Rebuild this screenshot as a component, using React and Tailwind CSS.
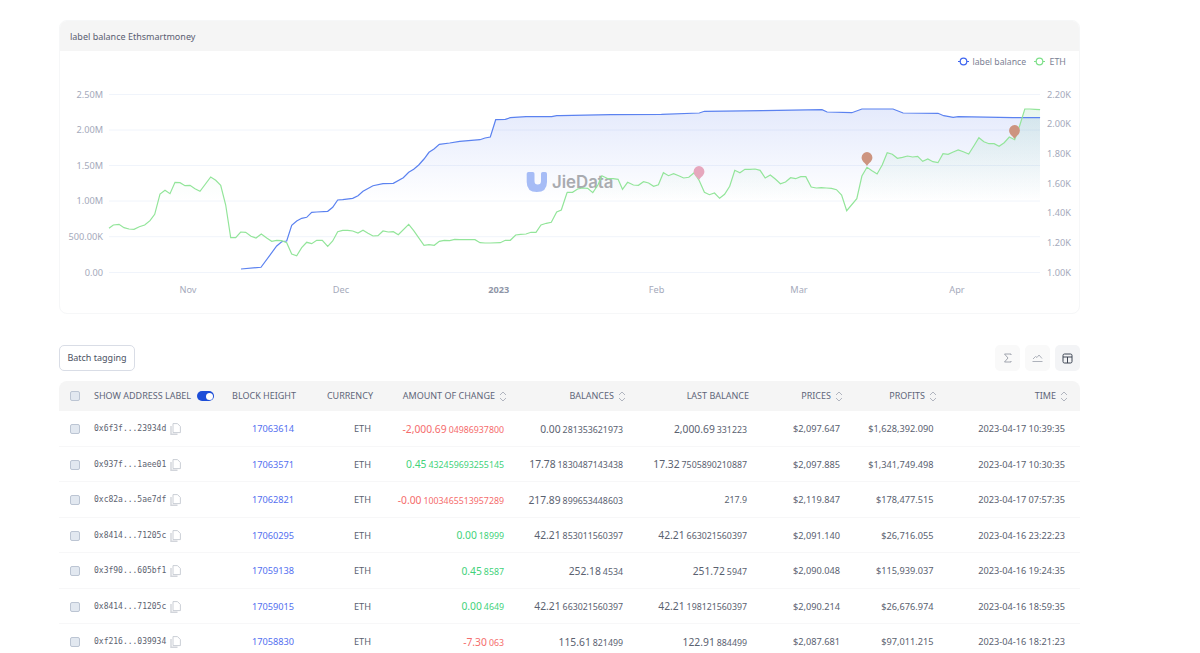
import React from 'react';

const FONT = { fontFamily: '"Noto Sans", "Open Sans", sans-serif' };

// traced from the reference, in crop coordinates
const left = (pts) => pts.map(([x, y]) => [50 + x / 3, 10 + y / 3]);
const right = (pts) => pts.map(([x, y]) => [560 + x / 2.958, 10 + y / 3]);

const green = [
  ...left([[177,655],[190,645],[207,643],[222,653],[237,657],[252,658],[268,650],[284,645],[300,632],[314,613],[330,552],[345,541],[360,551],[375,517],[390,518],[405,527],[420,526],[435,536],[450,544],[482,501],[497,511],[512,526],[527,585],[542,683],[557,683],[572,666],[587,667],[603,679],[618,684],[634,672],[650,684],[665,694],[680,691],[695,692],[710,698],[725,732],[740,737],[755,713],[770,697],[785,701],[800,691],[817,691],[833,709],[848,693],[863,665],[878,661],[893,661],[908,663],[924,669],[939,661],[954,670],[969,678],[984,677],[999,663],[1015,666],[1030,665],[1045,674],[1076,643],[1091,662],[1122,706],[1137,704],[1153,706],[1168,694],[1183,691],[1199,692],[1214,688],[1229,689],[1244,689],[1260,689],[1275,689],[1290,698],[1305,699],[1321,699],[1351,698],[1366,691],[1381,691],[1397,675],[1412,673],[1428,672],[1443,667],[1458,667],[1473,645],[1489,640],[1504,637],[1520,606],[1534,600],[1551,548]]),
  ...right([[22,547],[37,547],[52,537],[67,534],[82,535],[97,548],[112,525],[124,497],[142,506],[157,506],[172,508],[185,538],[200,517],[217,525],[232,526],[247,515],[262,519],[277,529],[291,524],[306,488],[321,497],[336,491],[351,497],[366,504],[381,502],[397,488],[412,512],[427,547],[442,554],[457,549],[472,565],[487,553],[502,529],[517,481],[532,488],[547,478],[562,478],[577,477],[592,481],[607,504],[622,495],[637,507],[652,521],[667,516],[682,503],[697,506],[712,500],[727,500],[743,531],[758,534],[773,533],[788,534],[803,535],[818,539],[833,555],[848,602],[878,566],[893,498],[908,472],[923,482],[938,492],[953,465],[968,428],[983,433],[998,445],[1013,442],[1028,438],[1043,441],[1058,439],[1073,454],[1088,447],[1103,455],[1118,458],[1133,431],[1148,433],[1163,426],[1178,420],[1193,425],[1209,432],[1224,408],[1239,383],[1254,395],[1269,401],[1284,401],[1299,409],[1314,398],[1329,381],[1345,389],[1360,346],[1375,297],[1390,297],[1405,298],[1420,299]]),
];

const blue = [
  ...left([[573,777],[633,772],[680,708],[695,695],[710,693],[725,646],[740,633],[755,625],[770,622],[785,607],[800,606],[833,604],[848,592],[863,570],[878,569],[908,565],[924,557],[939,544],[969,527],[999,521],[1030,520],[1060,503],[1076,487],[1091,478],[1106,465],[1122,447],[1137,427],[1152,417],[1168,403],[1199,399],[1229,394],[1290,389],[1305,384],[1321,381],[1337,329],[1366,328],[1381,323],[1428,320],[1505,320],[1520,317]]),
  ...right([[0,317],[150,314],[300,313],[412,309],[427,304],[600,302],[775,299],[790,306],[863,308],[893,297],[985,297],[1015,309],[1118,310],[1135,317],[1163,322],[1178,320],[1340,323],[1420,323]]),
];

const toLine = (pts) => pts.map(([x, y], i) => `${i ? 'L' : 'M'}${x.toFixed(1)} ${y.toFixed(1)}`).join(' ');
const toArea = (pts) => `${toLine(pts)} L${pts[pts.length - 1][0].toFixed(1)} 201 L${pts[0][0].toFixed(1)} 201 Z`;

const gridY = [94.5, 130, 165.5, 201, 236.7, 272.5];
const leftAxis = ['2.50M', '2.00M', '1.50M', '1.00M', '500.00K', '0.00'];
const rightAxis = [['2.20K', 94.5], ['2.00K', 124], ['1.80K', 154], ['1.60K', 183.5], ['1.40K', 213], ['1.20K', 243], ['1.00K', 272.5]];
const months = [['Nov', 188], ['Dec', 341], ['2023', 498.7], ['Feb', 656.5], ['Mar', 799], ['Apr', 957]];

const Pin = ({ x, y, color }) => (
  <path d={`M${x} ${y + 8.5} C${x - 1.5} ${y + 5.5} ${x - 5.4} ${y + 4} ${x - 5.4} ${y} A5.4 5.4 0 1 1 ${x + 5.4} ${y} C${x + 5.4} ${y + 4} ${x + 1.5} ${y + 5.5} ${x} ${y + 8.5} Z`} fill={color} />
);

const Chart = () => (
  <svg viewBox="59 51 1021 263" className="block w-[1021px] h-[263px]" style={FONT}>
    <defs>
      <linearGradient id="blueFill" gradientUnits="userSpaceOnUse" x1="0" y1="108" x2="0" y2="201">
        <stop offset="0" stopColor="#2f5ce8" stopOpacity="0.13" />
        <stop offset="1" stopColor="#2f5ce8" stopOpacity="0" />
      </linearGradient>
      <linearGradient id="greenFill" gradientUnits="userSpaceOnUse" x1="0" y1="108" x2="0" y2="201">
        <stop offset="0" stopColor="#3fb56f" stopOpacity="0.12" />
        <stop offset="1" stopColor="#3fb56f" stopOpacity="0" />
      </linearGradient>
      <clipPath id="areaClip">
        <rect x="109" y="90" width="931" height="111" />
      </clipPath>
    </defs>

    {gridY.map((y) => (
      <line key={y} x1="109" x2="1040" y1={y} y2={y} stroke="#f0f4fb" />
    ))}

    <g clipPath="url(#areaClip)">
      <path d={toArea(blue)} fill="url(#blueFill)" />
      <path d={toArea(green)} fill="url(#greenFill)" />
    </g>

    {/* watermark */}
    <path d="M528.500 172 H532.800 Q534.500 172 534.500 173.700 V181 Q534.500 184.500 537.700 184.500 Q541 184.500 541 181 V173.700 Q541 172 542.700 172 H545.200 Q547 172 547 173.700 V182 Q547 192 536.800 192 Q526.700 192 526.700 182 V173.700 Q526.700 172 528.500 172 Z" fill="#a6bcf6" />
    <text x="552" y="188" fontSize="16.800" fontWeight="600" fill="#a9abb0" style={{ fontFamily: 'Inter, sans-serif' }}>JieData</text>

    <path d={toLine(blue)} fill="none" stroke="#5b82f0" strokeWidth="1.200" />
    <path d={toLine(green)} fill="none" stroke="#93e59a" strokeWidth="1.200" />

    <Pin x={699} y={171.500} color="#e6a7bd" />
    <Pin x={867} y={157.500} color="#cd9480" />
    <Pin x={1014.500} y={130.500} color="#cd9480" />

    {leftAxis.map((t, i) => (
      <text key={t} x="103" y={gridY[i] + 3.300} textAnchor="end" fontSize="9.200" fill="#a5aabb">{t}</text>
    ))}
    {rightAxis.map(([t, y]) => (
      <text key={t} x="1047" y={y + 3.300} fontSize="9.200" fill="#a5aabb">{t}</text>
    ))}
    {months.map(([t, x]) => (
      <text key={t} x={x} y="293" textAnchor="middle" fontSize="9.200" fontWeight={t === '2023' ? 700 : 400} fill={t === '2023' ? '#8f96a8' : '#a5aabb'}>{t}</text>
    ))}

    {/* legend */}
    <line x1="958" x2="969" y1="61.500" y2="61.500" stroke="#3f66f0" strokeWidth="1.200" />
    <circle cx="963.500" cy="61.500" r="3.300" fill="#fff" stroke="#3f66f0" strokeWidth="1.200" />
    <text x="972.500" y="64.800" fontSize="8.700" fill="#7b8194">label balance</text>
    <line x1="1034" x2="1045" y1="61.500" y2="61.500" stroke="#7fe08a" strokeWidth="1.200" />
    <circle cx="1039.500" cy="61.500" r="3.300" fill="#fff" stroke="#7fe08a" strokeWidth="1.200" />
    <text x="1049.500" y="64.800" fontSize="8.900" fill="#7b8194">ETH</text>
  </svg>
);

const SortIcon = () => (
  <svg width="8" height="11" viewBox="0 0 8 11" fill="none" stroke="#a9aeb9" strokeWidth="0.900" className="shrink-0">
    <path d="M1 4 L4 1 L7 4" />
    <path d="M1 7 L4 10 L7 7" />
  </svg>
);

const CopyIcon = () => (
  <svg width="11" height="12" viewBox="0 0 11 12" fill="none" className="shrink-0">
    <path d="M1 3 V11.200 H7.500" stroke="#d2d5db" strokeWidth="1.400" />
    <path d="M3 .6 H7.500 L10.400 3.500 V9.600 H3 Z" stroke="#c4c8d0" strokeWidth="0.900" fill="#fff" />
  </svg>
);

const Checkbox = () => (
  <span className="block w-[10px] h-[10px] rounded-[2px] bg-[#e2e8f0] border border-[#bcc5d3]" />
);

const headCell = 'flex items-center justify-end gap-[4px] text-right';

const rows = [
  { addr: '0x6f3f...23934d', block: '17063614', sign: 'red', amount: ['-2,000.69', '04986937800'], bal: ['0.00', '281353621973'], last: ['2,000.69', '331223'], price: '$2,097.647', profit: '$1,628,392.090', time: '2023-04-17 10:39:35' },
  { addr: '0x937f...1aee01', block: '17063571', sign: 'green', amount: ['0.45', '432459693255145'], bal: ['17.78', '1830487143438'], last: ['17.32', '7505890210887'], price: '$2,097.885', profit: '$1,341,749.498', time: '2023-04-17 10:30:35' },
  { addr: '0xc82a...5ae7df', block: '17062821', sign: 'red', amount: ['-0.00', '1003465513957289'], bal: ['217.89', '899653448603'], last: ['', '217.9'], price: '$2,119.847', profit: '$178,477.515', time: '2023-04-17 07:57:35' },
  { addr: '0x8414...71205c', block: '17060295', sign: 'green', amount: ['0.00', '18999'], bal: ['42.21', '853011560397'], last: ['42.21', '663021560397'], price: '$2,091.140', profit: '$26,716.055', time: '2023-04-16 23:22:23' },
  { addr: '0x3f90...605bf1', block: '17059138', sign: 'green', amount: ['0.45', '8587'], bal: ['252.18', '4534'], last: ['251.72', '5947'], price: '$2,090.048', profit: '$115,939.037', time: '2023-04-16 19:24:35' },
  { addr: '0x8414...71205c', block: '17059015', sign: 'green', amount: ['0.00', '4649'], bal: ['42.21', '663021560397'], last: ['42.21', '198121560397'], price: '$2,090.214', profit: '$26,676.974', time: '2023-04-16 18:59:35' },
  { addr: '0xf216...039934', block: '17058830', sign: 'red', amount: ['-7.30', '063'], bal: ['115.61', '821499'], last: ['122.91', '884499'], price: '$2,087.681', profit: '$97,011.215', time: '2023-04-16 18:21:23' },
];

const Split = ({ parts, className = '' }) => (
  <span className={`whitespace-nowrap ${className}`}>
    {parts[0] && <span className="text-[10.300px]">{parts[0]}</span>}
    <span className="text-[8.800px] ml-[2px]">{parts[1]}</span>
  </span>
);

const COLS = 'grid grid-cols-[35px_120px_82px_77px_134px_119px_123px_94px_94px_131px_12px] items-center';

export default function App() {
  return (
    <div className="w-[1200px] h-[653px] overflow-hidden bg-white pt-5 pl-[59px]" style={FONT}>
      <div className="w-[1021px]">
        {/* Chart card */}
        <div className="rounded-lg border border-[#f6f7f8] overflow-hidden h-[294px]">
          <div className="h-[31px] -mt-px -mx-px pt-[2px] bg-[#f5f5f5] flex items-center px-[11px] text-[9px] text-[#5a6072]">
            label balance Ethsmartmoney
          </div>
          <div className="-mx-px">
            <Chart />
          </div>
        </div>

        {/* Toolbar */}
        <div className="flex items-center justify-between mt-[31px] h-[26px]">
          <button className="h-[26px] w-[76px] rounded-[5px] border border-[#d9dde6] bg-white text-[9px] text-[#4b5263]">
            Batch tagging
          </button>
          <div className="flex gap-[5px]">
            <span className="w-[25px] h-[26px] rounded-[5px] bg-[#f9f9f9] flex items-center justify-center">
              <svg width="10" height="10" viewBox="0 0 10 10" fill="none" stroke="#8b909c" strokeWidth="0.800"><path d="M8 2 V1 H1.500 L5 5 L1.500 9 H8 V8" /></svg>
            </span>
            <span className="w-[25px] h-[26px] rounded-[5px] bg-[#f9f9f9] flex items-center justify-center">
              <svg width="11" height="10" viewBox="0 0 11 10" fill="none" stroke="#9aa0ab" strokeWidth="0.800"><path d="M1 6 L3.500 3.500 L5 4.500 L7 2 L10 5.500" /><path d="M.5 8.500 H10.500" /></svg>
            </span>
            <span className="w-[25px] h-[26px] rounded-[5px] bg-[#f3f4f6] flex items-center justify-center">
              <svg width="11" height="11" viewBox="0 0 11 11" fill="none" stroke="#3f4654" strokeWidth="1"><rect x="1" y="1" width="9" height="9" rx="1.500" /><path d="M1 4 H10 M5.500 4 V10" /></svg>
            </span>
          </div>
        </div>

        {/* Table */}
        <div className={`${COLS} mt-[10px] h-[30px] bg-[#f5f5f5] rounded-t-lg text-[9px] text-[#5f6579]`}>
          <span className="pl-[11px]"><Checkbox /></span>
          <span className="flex items-center justify-between whitespace-nowrap">
            SHOW ADDRESS LABEL
            <span className="w-[17px] h-[10px] rounded-full bg-[#1d4ed8] flex items-center justify-end pr-[1.500px]">
              <span className="w-[7px] h-[7px] rounded-full bg-white" />
            </span>
          </span>
          <span className={headCell}>BLOCK HEIGHT</span>
          <span className={headCell}>CURRENCY</span>
          <span className={headCell}>AMOUNT OF CHANGE <SortIcon /></span>
          <span className={headCell}>BALANCES <SortIcon /></span>
          <span className={headCell}>LAST BALANCE</span>
          <span className={headCell}>PRICES <SortIcon /></span>
          <span className={headCell}>PROFITS <SortIcon /></span>
          <span className={headCell}>TIME <SortIcon /></span>
          <span />
        </div>
        {rows.map((r) => {
          const tone = r.sign === 'red' ? 'text-[#f56c6c]' : 'text-[#42d27a]';
          return (
            <div key={r.block} className={`${COLS} h-[35.500px] pt-[2px] border-b border-[#f7f7f8] text-[9.200px] text-[#5a6170]`}>
              <span className="pl-[11px]"><Checkbox /></span>
              <span className="flex items-center gap-[4px]">
                <span className="text-[8px] text-[#5c6270]" style={{ fontFamily: '"DejaVu Sans Mono", monospace' }}>{r.addr}</span>
                <CopyIcon />
              </span>
              <span className="text-right pr-[2px] text-[#5470f0]">{r.block}</span>
              <span className="text-right pr-[2px]">ETH</span>
              <Split parts={r.amount} className={`text-right pr-[3px] ${tone}`} />
              <Split parts={r.bal} className="text-right pr-[3px]" />
              <Split parts={r.last} className="text-right pr-[2px]" />
              <span className="text-right pr-[3px]">{r.price}</span>
              <span className="text-right pr-[3.500px]">{r.profit}</span>
              <span className="text-right pr-[3px] whitespace-nowrap">{r.time}</span>
              <span />
            </div>
          );
        })}
      </div>
    </div>
  );
}
